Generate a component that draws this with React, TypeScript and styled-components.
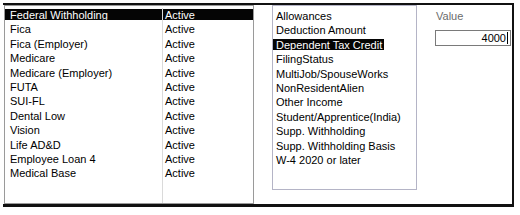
import React from "react";
import styled, { createGlobalStyle } from "styled-components";

interface Deduction {
  name: string;
  status: string;
}

const deductions: Deduction[] = [
  { name: "Federal Withholding", status: "Active" },
  { name: "Fica", status: "Active" },
  { name: "Fica (Employer)", status: "Active" },
  { name: "Medicare", status: "Active" },
  { name: "Medicare (Employer)", status: "Active" },
  { name: "FUTA", status: "Active" },
  { name: "SUI-FL", status: "Active" },
  { name: "Dental Low", status: "Active" },
  { name: "Vision", status: "Active" },
  { name: "Life AD&D", status: "Active" },
  { name: "Employee Loan 4", status: "Active" },
  { name: "Medical Base", status: "Active" },
];

const keys = [
  "Allowances",
  "Deduction Amount",
  "Dependent Tax Credit",
  "FilingStatus",
  "MultiJob/SpouseWorks",
  "NonResidentAlien",
  "Other Income",
  "Student/Apprentice(India)",
  "Supp. Withholding",
  "Supp. Withholding Basis",
  "W-4 2020 or later",
];

const GlobalStyle = createGlobalStyle`
  html, body {
    margin: 0;
    padding: 0;
    background: #ffffff;
  }
  body {
    font-family: "Liberation Sans", Arial, sans-serif;
    font-size: 11px;
    color: #000000;
  }
`;

const Frame = styled.div`
  box-sizing: border-box;
  margin: 3px 0 0 3px;
  width: 511px;
  height: 204px;
  display: flex;
  align-items: flex-start;
  background: #ffffff;
  border-top: 2px solid #111111;
  border-right: 2px solid #111111;
  border-bottom: 3px solid #111111;
`;

const ListView = styled.div`
  box-sizing: border-box;
  margin-left: 1px;
  width: 250px;
  height: 199px;
  border: 1px solid #9a9a9a;
  padding-top: 2px;
  display: flex;
`;

const Column = styled.div<{ $width?: number; $divider?: boolean }>`
  box-sizing: border-box;
  height: 100%;
  width: ${(p) => (p.$width ? `${p.$width}px` : "auto")};
  flex: ${(p) => (p.$width ? "none" : "1")};
  border-right: ${(p) => (p.$divider ? "1px solid #dadada" : "none")};
`;

const Cell = styled.div<{ $selected?: boolean; $pad: number }>`
  height: 14.4px;
  line-height: 14.4px;
  padding-left: ${(p) => p.$pad}px;
  white-space: nowrap;
  color: ${(p) => (p.$selected ? "#ffffff" : "#000000")};
  background: ${(p) =>
    p.$selected
      ? "linear-gradient(#050505, #050505) 0 1px / 100% 11px no-repeat"
      : "transparent"};
`;

const ListBox = styled.div`
  box-sizing: border-box;
  margin-left: 18px;
  width: 145px;
  height: 185px;
  border: 1px solid #b4b4c6;
  padding-top: 3px;
`;

const KeyItem = styled.div`
  height: 14.4px;
  line-height: 14.4px;
  white-space: nowrap;
`;

const KeyText = styled.span<{ $selected?: boolean }>`
  display: inline-block;
  padding: 0 2px 0 3px;
  color: ${(p) => (p.$selected ? "#ffffff" : "#000000")};
  background: ${(p) =>
    p.$selected
      ? "linear-gradient(#050505, #050505) 0 1px / 100% 11px no-repeat"
      : "transparent"};
`;

const ValuePane = styled.div`
  display: flex;
  flex-direction: column;
  padding: 5px 0 0 18px;
`;

const Label = styled.div`
  padding-left: 1px;
  line-height: 13px;
  color: #6b6b6b;
`;

const TextBox = styled.div`
  box-sizing: border-box;
  margin-top: 7px;
  width: 76px;
  height: 16px;
  border: 1px solid #7a7a7a;
  display: flex;
  align-items: center;
  justify-content: flex-end;
  padding-right: 2px;
  line-height: 14px;
`;

const Caret = styled.span`
  display: inline-block;
  width: 1px;
  height: 12px;
  margin-left: 1px;
  background: #000000;
`;

const SELECTED_DEDUCTION = 0;
const SELECTED_KEY = 2;

const App = () => {
  return (
    <>
      <GlobalStyle />
      <Frame>
        <ListView>
          <Column $width={158} $divider>
            {deductions.map((d, i) => (
              <Cell key={d.name} $pad={5} $selected={i === SELECTED_DEDUCTION}>
                {d.name}
              </Cell>
            ))}
          </Column>
          <Column>
            {deductions.map((d, i) => (
              <Cell key={d.name} $pad={2} $selected={i === SELECTED_DEDUCTION}>
                {d.status}
              </Cell>
            ))}
          </Column>
        </ListView>
        <ListBox>
          {keys.map((k, i) => (
            <KeyItem key={k}>
              <KeyText $selected={i === SELECTED_KEY}>{k}</KeyText>
            </KeyItem>
          ))}
        </ListBox>
        <ValuePane>
          <Label>Value</Label>
          <TextBox>
            4000
            <Caret />
          </TextBox>
        </ValuePane>
      </Frame>
    </>
  );
};

export default App;
